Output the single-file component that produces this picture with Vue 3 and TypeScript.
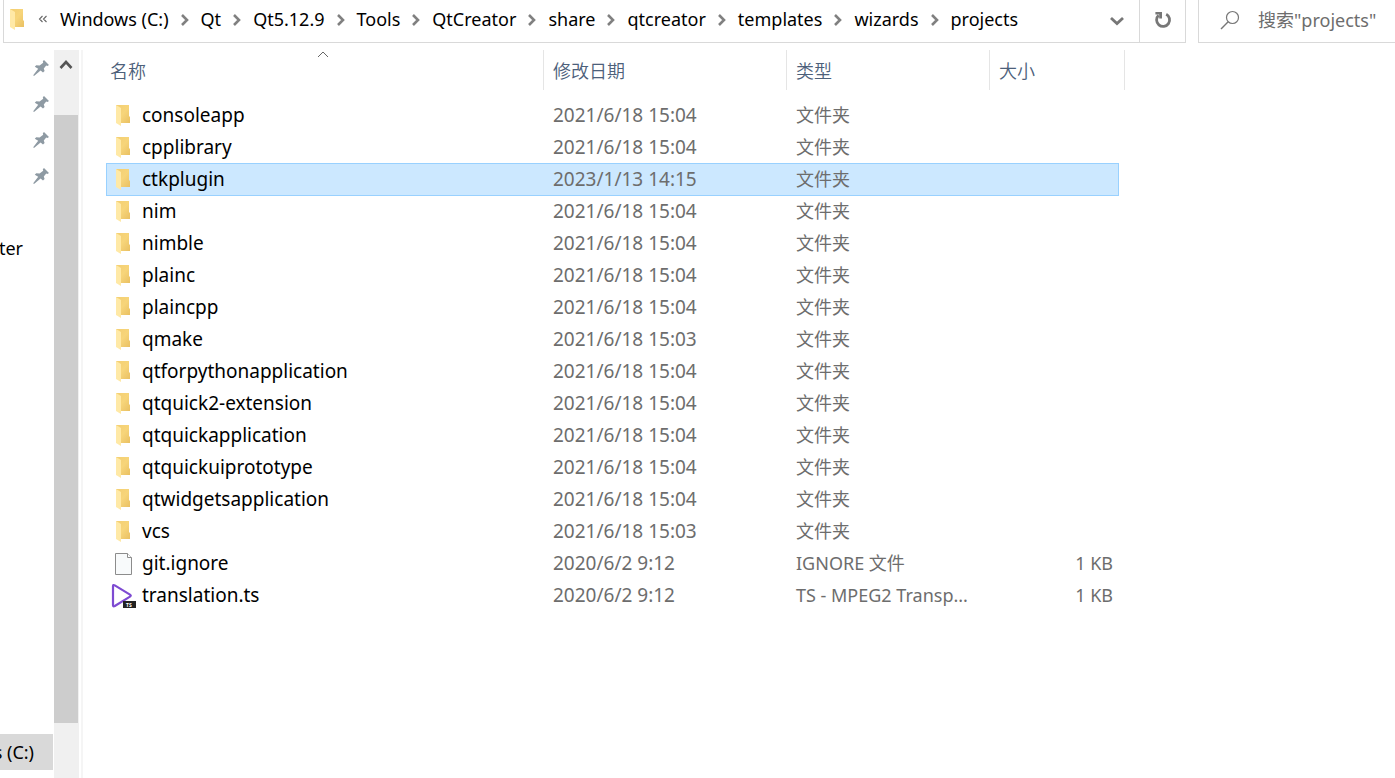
<script setup lang="ts">
import { ref } from 'vue'

type Kind = 'folder' | 'file' | 'video'

interface Entry {
  name: string
  date: string
  type: string
  size: string
  kind: Kind
}

const folder = (name: string, date = '2021/6/18 15:04'): Entry => ({
  name,
  date,
  type: '文件夹',
  size: '',
  kind: 'folder',
})

const crumbs = [
  'Windows (C:)',
  'Qt',
  'Qt5.12.9',
  'Tools',
  'QtCreator',
  'share',
  'qtcreator',
  'templates',
  'wizards',
  'projects',
]

const entries: Entry[] = [
  folder('consoleapp'),
  folder('cpplibrary'),
  folder('ctkplugin', '2023/1/13 14:15'),
  folder('nim'),
  folder('nimble'),
  folder('plainc'),
  folder('plaincpp'),
  folder('qmake', '2021/6/18 15:03'),
  folder('qtforpythonapplication'),
  folder('qtquick2-extension'),
  folder('qtquickapplication'),
  folder('qtquickuiprototype'),
  folder('qtwidgetsapplication'),
  folder('vcs', '2021/6/18 15:03'),
  { name: 'git.ignore', date: '2020/6/2 9:12', type: 'IGNORE 文件', size: '1 KB', kind: 'file' },
  { name: 'translation.ts', date: '2020/6/2 9:12', type: 'TS - MPEG2 Transp...', size: '1 KB', kind: 'video' },
]

const selected = ref('ctkplugin')
const query = ref('')
</script>

<template>
  <div class="explorer">
    <header class="topbar">
      <nav class="address" aria-label="地址">
        <svg class="folder" viewBox="1 0 16 22" aria-hidden="true">
          <path d="M1 0H14V11L15 12V18H6L1 16Z" fill="url(#gold)" />
          <path d="M1 0L6 3V21L1 18Z" fill="#ffe9a6" />
        </svg>
        <button class="more" type="button" aria-label="上级位置">
          <svg width="10" height="8" viewBox="0 0 10 8">
            <path d="M4.5 1L1.5 4L4.5 7M8.5 1L5.5 4L8.5 7" fill="none" stroke="#666" stroke-width="1.1" />
          </svg>
        </button>
        <template v-for="(crumb, i) in crumbs" :key="crumb">
          <svg v-if="i > 0" class="sep" viewBox="0 0 8 12" aria-hidden="true">
            <path d="M1 1L6 6L1 11" fill="none" stroke="#808080" stroke-width="2.6" />
          </svg>
          <button class="crumb" type="button">{{ crumb }}</button>
        </template>
        <button class="history" type="button" aria-label="以前的位置">
          <svg width="16" height="12" viewBox="0 0 16 12">
            <path d="M2 4L8 9.5L14 4" fill="none" stroke="#777" stroke-width="2.8" />
          </svg>
        </button>
      </nav>
      <button class="refresh" type="button" aria-label="刷新">
        <svg width="18" height="18" viewBox="0 0 18 18">
          <path d="M12.2 3.2A6.5 6.5 0 1 1 4.6 4.2" fill="none" stroke="#777" stroke-width="2.8" />
          <path d="M1.4 1H8V7.6H5.2V3.6H1.4Z" fill="#777" />
        </svg>
      </button>
      <label class="search">
        <svg width="20" height="20" viewBox="0 0 20 20" aria-hidden="true">
          <circle cx="12.5" cy="7.5" r="6" fill="none" stroke="#777" stroke-width="1.2" />
          <path d="M8.2 11.8L1 19" stroke="#777" stroke-width="1.4" />
        </svg>
        <input v-model="query" type="text" placeholder="搜索&quot;projects&quot;" aria-label="搜索" />
      </label>
    </header>

    <div class="body">
      <aside class="tree">
        <div v-for="n in 4" :key="n" class="node pinned">
          <svg width="16" height="16" viewBox="0 0 16 16" aria-hidden="true">
            <path
              d="M11 0L16 5L14.4 6L13.2 5.6L10.8 8.6L11.6 11L10 12.6L7.6 10.6L1 16L0.2 15.2L5.2 8.8L1.8 6.8L3.2 5.2L6.6 5.4L10.2 2.8L9.8 1.2Z"
              fill="#8e9aa3"
            />
          </svg>
        </div>
        <div class="node gap"></div>
        <div class="node computer">ter</div>
        <div class="node drive">s (C:)</div>
      </aside>

      <div class="scrollbar">
        <button type="button" aria-label="向上滚动">
          <svg width="14" height="11" viewBox="0 0 14 11">
            <path d="M1.5 9L7 3L12.5 9" fill="none" stroke="#555" stroke-width="2.6" />
          </svg>
        </button>
        <div class="thumb"></div>
        <div class="track"></div>
      </div>

      <main class="files">
        <table>
          <colgroup>
            <col class="c-name" />
            <col class="c-date" />
            <col class="c-type" />
            <col class="c-size" />
            <col class="c-end" />
          </colgroup>
          <thead>
            <tr>
              <th aria-sort="ascending">
                <div class="head">
                  名称
                  <svg class="sort" width="12" height="7" viewBox="0 0 12 7" aria-hidden="true">
                    <path d="M1 6L6 1L11 6" fill="none" stroke="#666" />
                  </svg>
                </div>
              </th>
              <th><div class="head">修改日期</div></th>
              <th><div class="head">类型</div></th>
              <th colspan="2"><div class="head">大小</div></th>
            </tr>
          </thead>
          <tbody>
            <tr
              v-for="e in entries"
              :key="e.name"
              :class="{ selected: e.name === selected }"
              @click="selected = e.name"
            >
              <td>
                <div class="name">
                  <span class="icon">
                    <svg v-if="e.kind === 'folder'" class="folder" viewBox="1 0 16 22" aria-hidden="true">
                      <path d="M1 0H14V11L15 12V18H6L1 16Z" fill="url(#gold)" />
                      <path d="M1 0L6 3V21L1 18Z" fill="#ffe9a6" />
                    </svg>
                    <svg v-else-if="e.kind === 'file'" width="18" height="22" viewBox="0 0 18 22" aria-hidden="true">
                      <path d="M0.5 0.5H12.5L16.5 4.5V21.5H0.5Z" fill="#f8fafb" stroke="#8c8c8c" />
                      <path d="M12.5 0.5V4.5H16.5" fill="#fff" stroke="#8c8c8c" />
                    </svg>
                    <svg v-else width="26" height="26" viewBox="0 0 26 26" aria-hidden="true">
                      <path
                        d="M2 3.2Q2 1.4 3.8 2.4L19 11.6Q20.6 12.6 19 13.6L3.8 23Q2 24 2 22.2Z"
                        fill="#fff"
                        stroke="#7e4bd2"
                        stroke-width="2.2"
                      />
                      <rect x="12" y="18" width="13" height="7" fill="#222" />
                      <text x="15" y="24" class="badge">TS</text>
                    </svg>
                  </span>
                  {{ e.name }}
                </div>
              </td>
              <td class="date">{{ e.date }}</td>
              <td>{{ e.type }}</td>
              <td class="size">{{ e.size }}</td>
            </tr>
          </tbody>
        </table>
      </main>
    </div>

    <svg class="defs" width="0" height="0" aria-hidden="true">
      <defs>
        <linearGradient id="gold" x1="0" y1="0" x2="1" y2="1">
          <stop offset="0" stop-color="#f3ce72" />
          <stop offset="0.5" stop-color="#f7d57a" />
          <stop offset="1" stop-color="#e9c062" />
        </linearGradient>
      </defs>
    </svg>
  </div>
</template>

<style>
body {
  margin: 0;
  background: #fff;
}
</style>

<style scoped>
.explorer {
  display: flex;
  flex-direction: column;
  height: 100vh;
  overflow: hidden;
  background: #fff;
  color: #000;
  font: 18px/24px 'Noto Sans', 'Noto Sans CJK SC', sans-serif;
}

svg {
  display: block;
  flex: none;
}

.defs {
  position: absolute;
}

button {
  display: flex;
  align-items: center;
  justify-content: center;
  padding: 0;
  border: 0;
  background: none;
  color: inherit;
  font: inherit;
}

.folder {
  width: 16px;
  height: 22px;
}

.topbar {
  display: flex;
  flex: none;
  height: 43px;
}

.address,
.refresh,
.search {
  box-sizing: border-box;
  border: solid #d9d9d9;
  border-width: 0 1px 1px;
}

.address {
  display: flex;
  flex: 1;
  align-items: center;
  min-width: 0;
  margin-left: 3px;
  padding: 0 14px 4px 6px;
  white-space: nowrap;
}

.address .folder {
  margin-top: 2px;
}

.more {
  width: 34px;
  height: 24px;
}

.sep {
  width: 8px;
  height: 12px;
  margin: 2px 12px 0;
}

.history {
  margin-top: 2px;
  margin-left: auto;
}

.refresh {
  width: 46px;
  padding-bottom: 2px;
  border-left: 0;
}

.search {
  display: flex;
  align-items: center;
  width: 197px;
  margin-left: 12px;
  padding: 0 0 3px 21px;
  border-right: 0;
}

.search input {
  flex: 1;
  min-width: 0;
  margin-left: 18px;
  padding: 0;
  border: 0;
  outline: 0;
  background: none;
  font: inherit;
}

.search input::placeholder {
  color: #6d6d6d;
  opacity: 1;
}

.body {
  display: flex;
  flex: 1;
  min-height: 0;
  padding-top: 7px;
}

.tree {
  display: flex;
  flex: none;
  flex-direction: column;
  width: 53px;
  overflow: hidden;
}

.node {
  display: flex;
  flex: none;
  align-items: center;
  justify-content: flex-end;
  box-sizing: border-box;
  height: 36px;
  white-space: nowrap;
}

.pinned {
  padding-right: 4px;
}

.computer {
  padding-right: 30px;
}

.drive {
  margin: auto 0 8px;
  padding-right: 19px;
  background: #d9d9d9;
}

.scrollbar {
  display: flex;
  flex: none;
  flex-direction: column;
  width: 25px;
  margin-left: 1px;
  background: #f0f0f0;
}

.scrollbar button {
  align-items: flex-start;
  height: 65px;
  padding: 9px 1px 0 0;
}

.thumb {
  flex: 608;
  margin-right: 1px;
  background: #cdcdcd;
}

.track {
  flex: 55;
}

.files {
  flex: 1;
  min-width: 0;
  margin-left: 2px;
  padding-left: 23px;
  border-left: 2px solid #f5f5f5;
}

table {
  width: 1019px;
  table-layout: fixed;
  border-collapse: collapse;
}

.c-name {
  width: 438px;
}

.c-date {
  width: 243px;
}

.c-type {
  width: 203px;
}

.c-size {
  width: 129px;
}

.c-end {
  width: 6px;
}

th {
  padding: 0 0 9px;
  color: #4c607a;
  font-weight: 350;
  text-align: left;
}

.head {
  position: relative;
  box-sizing: border-box;
  height: 40px;
  padding-left: 9px;
  border-right: 1px solid #e5e5e5;
  line-height: 42px;
}

th:first-child .head {
  padding-left: 4px;
}

.sort {
  position: absolute;
  top: 1px;
  left: calc(50% - 8px);
}

td {
  height: 32px;
  padding: 0 0 0 9px;
  color: #6d6d6d;
  white-space: nowrap;
}

td:first-child {
  padding-left: 4px;
  color: #000;
  font-size: 19px;
}

td.date {
  font-size: 19px;
}

.selected td {
  background: #cce8ff;
  box-shadow:
    inset 0 1px #99d1ff,
    0 1px #99d1ff;
}

.selected td:first-child {
  box-shadow:
    inset 1px 1px #99d1ff,
    0 1px #99d1ff;
}

.selected td:last-child {
  box-shadow:
    inset -1px 1px #99d1ff,
    0 1px #99d1ff;
}

td.size {
  padding-right: 6px;
  text-align: right;
}

.name {
  display: flex;
  align-items: center;
}

.icon {
  display: flex;
  justify-content: center;
  width: 28px;
  margin-right: 4px;
  padding-top: 1px;
}

.badge {
  fill: #fff;
  font: 700 5px 'Noto Sans', sans-serif;
}
</style>
